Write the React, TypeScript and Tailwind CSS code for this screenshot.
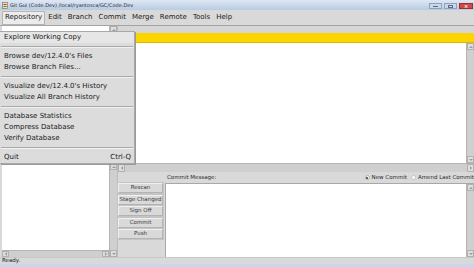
import React from "react";

const font = "font-['DejaVu_Sans',sans-serif]";

function VScroll({ className = "" }: { className?: string }) {
  return (
    <div className={`w-[8px] flex flex-col bg-[#cfcfcf] border-l border-[#b4b4b4] ${className}`}>
      <div className="h-[7px] bg-[#dedede] border border-[#b0b0b0] flex items-center justify-center">
        <div className="w-0 h-0 border-l-[2px] border-r-[2px] border-b-[2px] border-l-transparent border-r-transparent border-b-[#9a9a9a]" />
      </div>
      <div className="flex-1" />
      <div className="h-[7px] bg-[#dedede] border border-[#b0b0b0] flex items-center justify-center">
        <div className="w-0 h-0 border-l-[2px] border-r-[2px] border-t-[2px] border-l-transparent border-r-transparent border-t-[#9a9a9a]" />
      </div>
    </div>
  );
}

function HScroll({ className = "" }: { className?: string }) {
  return (
    <div className={`flex bg-[#cfcfcf] border-t border-[#b4b4b4] ${className}`}>
      <div className="w-[7px] bg-[#dedede] border border-[#b0b0b0] flex items-center justify-center">
        <div className="w-0 h-0 border-t-[2px] border-b-[2px] border-r-[2px] border-t-transparent border-b-transparent border-r-[#9a9a9a]" />
      </div>
      <div className="flex-1" />
      <div className="w-[7px] bg-[#dedede] border border-[#b0b0b0] flex items-center justify-center">
        <div className="w-0 h-0 border-t-[2px] border-b-[2px] border-l-[2px] border-t-transparent border-b-transparent border-l-[#9a9a9a]" />
      </div>
    </div>
  );
}

function MenuItem({ label, accel, active }: { label: string; accel?: string; active?: boolean }) {
  return (
    <div
      className={`h-[11px] flex items-center justify-between pl-[4px] pr-[3px] text-[7px] leading-none text-[#1a1a1a] ${
        active ? "bg-[#e6e6e6]" : ""
      }`}
    >
      <span>{label}</span>
      {accel && <span>{accel}</span>}
    </div>
  );
}

function Sep() {
  return (
    <div className="h-[8px] flex flex-col justify-center px-[1px]">
      <div className="h-[1px] bg-[#a9a9a9]" />
      <div className="h-[1px] bg-[#f2f2f2]" />
    </div>
  );
}

function Btn({ label }: { label: string }) {
  return (
    <div className="h-[10px] w-[45px] bg-[#d9d9d9] border border-[#b3b3b3] border-t-[#f0f0f0] border-l-[#f0f0f0] shadow-[0_0_0_1px_#c4c4c4] flex items-center justify-center text-[5.5px] text-[#3a3a3a] leading-none">
      {label}
    </div>
  );
}

export default function App() {
  const menus = ["Repository", "Edit", "Branch", "Commit", "Merge", "Remote", "Tools", "Help"];
  return (
    <div className={`w-[474px] h-[267px] relative overflow-hidden bg-[#d9d9d9] flex flex-col ${font}`}>
      {/* Title bar */}
      <div className="h-[10px] bg-gradient-to-b from-[#dfe8f4] to-[#b7cbe4] flex items-center relative">
        <svg width="6" height="7" viewBox="0 0 6 7" className="ml-[2px]">
          <rect x="0.5" y="0.5" width="5" height="6" fill="#e9e2c8" stroke="#7a6a3a" strokeWidth="0.6" />
          <rect x="1.5" y="2" width="3" height="1" fill="#c03a2a" />
          <rect x="1.5" y="4" width="3" height="1" fill="#3a8a3a" />
        </svg>
        <span className="ml-[2px] text-[5px] leading-none text-[#2a2a2a]">Git Gui (Code.Dev) /local/ryantosca/GC/Code.Dev</span>
        <div className="absolute right-[1px] top-[3px] flex gap-[2px]">
          <div className="w-[13px] h-[6px] bg-[#c9d7ea] border border-[#8ea2bd] flex items-end justify-center pb-[1px]">
            <div className="w-[5px] h-[1px] bg-[#5a6a80]" />
          </div>
          <div className="w-[13px] h-[6px] bg-[#c9d7ea] border border-[#8ea2bd] flex items-center justify-center">
            <div className="w-[5px] h-[3px] border border-[#5a6a80]" />
          </div>
          <div className="w-[14px] h-[6px] bg-[#cf4b43] border border-[#9a3030] flex items-center justify-center text-[5px] leading-none text-white font-bold">
            ×
          </div>
        </div>
      </div>

      {/* Menu bar */}
      <div className="h-[16px] flex items-center pl-[2px] border-b border-[#a4a4a4]">
        {menus.map((m, i) => (
          <div
            key={m}
            className={`h-[14px] flex items-center px-[2px] border text-[7px] leading-none text-[#1a1a1a] ${
              i === 0 ? "bg-[#ececec] border-[#b4b4b4]" : "border-transparent"
            }`}
          >
            {m}
          </div>
        ))}
      </div>

      {/* Body */}
      <div className="flex-1 flex min-h-0">
        {/* Left column */}
        <div className="w-[118px] flex flex-col border-r border-[#bdbdbd]">
          <div className="h-[137px] flex pl-[2px]">
            <div className="flex-1 bg-white" />
            <VScroll />
          </div>
          <div className="flex-1 flex pl-[2px] min-h-0">
            <div className="flex-1 flex flex-col">
              <div className="flex-1 bg-white" />
              <HScroll className="h-[7px]" />
            </div>
            <VScroll />
          </div>
        </div>

        {/* Right column */}
        <div className="flex-1 flex flex-col min-w-0">
          <div className="h-[7px] bg-[#d6d6d6]" />
          <div className="h-[10px] bg-[#fcd400] border-b border-[#d8b800]" />
          <div className="h-[120px] flex">
            <div className="flex-1 bg-white" />
            <VScroll />
          </div>
          <HScroll className="h-[9px]" />
          <div className="flex-1 flex min-h-0">
            <div className="w-[47px] flex flex-col pt-[11px] gap-[1.5px]">
              <Btn label="Rescan" />
              <Btn label="Stage Changed" />
              <Btn label="Sign Off" />
              <Btn label="Commit" />
              <Btn label="Push" />
            </div>
            <div className="flex-1 flex flex-col min-w-0">
              <div className="h-[11px] flex items-center justify-between pl-[2px] text-[5.5px] leading-none text-[#2a2a2a]">
                <span>Commit Message:</span>
                <div className="flex items-center">
                  <div className="w-[5px] h-[5px] rounded-full bg-[#f4f4f4] border border-[#b0b0b0] flex items-center justify-center">
                    <div className="w-[2px] h-[2px] rounded-full bg-[#333]" />
                  </div>
                  <span className="ml-[2px]">New Commit</span>
                  <div className="ml-[4px] w-[5px] h-[5px] rounded-full bg-white border border-[#c4c4c4]" />
                  <span className="ml-[2px]">Amend Last Commit</span>
                </div>
              </div>
              <div className="flex-1 flex border-l border-t border-[#a8a8a8]">
                <div className="flex-1 bg-white" />
                <VScroll />
              </div>
            </div>
          </div>
        </div>
      </div>

      {/* Status bar */}
      <div className="h-[7px] flex items-center pl-[2px] text-[5.5px] leading-none text-[#222] border-t border-[#c8c8c8]">
        Ready.
      </div>
      <div className="h-[3px] bg-[#c5d8ee]" />

      {/* Repository dropdown */}
      <div className="absolute left-0 top-[31px] w-[135px] bg-[#dcdcdc] border border-[#a8a8a8] border-l-0 flex flex-col shadow-[1px_1px_0_#9a9a9a]">
        <MenuItem label="Explore Working Copy" active />
        <Sep />
        <MenuItem label="Browse dev/12.4.0's Files" />
        <MenuItem label="Browse Branch Files..." />
        <Sep />
        <MenuItem label="Visualize dev/12.4.0's History" />
        <MenuItem label="Visualize All Branch History" />
        <Sep />
        <MenuItem label="Database Statistics" />
        <MenuItem label="Compress Database" />
        <MenuItem label="Verify Database" />
        <Sep />
        <MenuItem label="Quit" accel="Ctrl-Q" />
      </div>
    </div>
  );
}
